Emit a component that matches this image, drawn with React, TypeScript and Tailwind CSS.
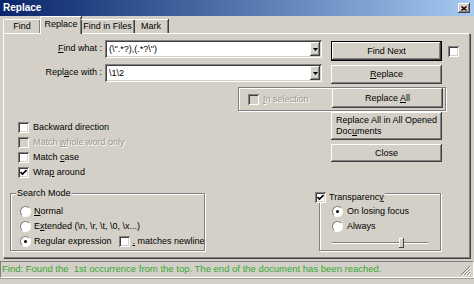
import React from "react";

const raised =
  "shadow-[inset_-1px_-1px_0_#404040,inset_1px_1px_0_#ffffff,inset_-2px_-2px_0_#808080]";
const raisedDef =
  "shadow-[inset_0_0_0_1px_#000000,inset_-2px_-2px_0_#404040,inset_2px_2px_0_#ffffff,inset_-3px_-3px_0_#808080]";
const sunken =
  "shadow-[inset_1px_1px_0_#808080,inset_-1px_-1px_0_#ffffff,inset_2px_2px_0_#404040,inset_-2px_-2px_0_#d4d0c8]";

function Btn({
  children,
  className = "",
  def = false,
}: {
  children: React.ReactNode;
  className?: string;
  def?: boolean;
}) {
  return (
    <div
      className={`flex items-center justify-center bg-[#d4d0c8] text-black text-[9px] leading-[11px] ${
        def ? raisedDef : raised
      } ${className}`}
    >
      {children}
    </div>
  );
}

function Check({
  checked = false,
  disabled = false,
}: {
  checked?: boolean;
  disabled?: boolean;
}) {
  return (
    <div
      className={`w-[11px] h-[11px] shrink-0 flex items-center justify-center ${
        disabled ? "bg-[#d4d0c8]" : "bg-white"
      } ${sunken}`}
    >
      {checked && (
        <svg width="7" height="7" viewBox="0 0 7 7">
          <path d="M0.5 3 L2.5 5 L6.5 1" stroke="#000" strokeWidth="1.6" fill="none" />
        </svg>
      )}
    </div>
  );
}

function Radio({ checked = false }: { checked?: boolean }) {
  return (
    <div className="w-[11px] h-[11px] shrink-0 rounded-full bg-white border border-[#808080] border-b-white border-r-white flex items-center justify-center">
      {checked && <div className="w-[3px] h-[3px] rounded-full bg-black" />}
    </div>
  );
}

function Combo({ value }: { value: string }) {
  return (
    <div className={`ml-[3px] w-[217px] h-[18px] bg-white flex items-center ${sunken}`}>
      <span className="pl-[4px] flex-1 text-[9px] leading-none text-black">{value}</span>
      <div
        className={`mr-[2px] w-[10px] h-[14px] bg-[#d4d0c8] flex items-center justify-center ${raised}`}
      >
        <svg width="5" height="3" viewBox="0 0 5 3">
          <path d="M0 0 H5 L2.5 3 Z" fill="#000" />
        </svg>
      </div>
    </div>
  );
}

export default function App() {
  return (
    <div className="w-[474px] h-[284px] bg-[#d4d0c8] flex flex-col overflow-hidden font-['Liberation_Sans',Arial,sans-serif] text-[9px] text-black select-none">
      {/* Title bar */}
      <div className="h-[16px] shrink-0 flex items-center justify-between pl-[3px] pr-[4px] bg-gradient-to-r from-[#0a246a] to-[#a6caf0]">
        <span className="text-white font-bold text-[10px] leading-none">Replace</span>
        <div className={`w-[12px] h-[10px] bg-[#d4d0c8] flex items-center justify-center ${raised}`}>
          <svg width="6" height="5" viewBox="0 0 6 5">
            <path d="M0.5 0.5 L5.5 4.5 M5.5 0.5 L0.5 4.5" stroke="#000" strokeWidth="1.4" />
          </svg>
        </div>
      </div>

      {/* Tabs */}
      <div className="h-[17px] shrink-0 flex items-end pl-[3px] relative z-10">
        <div className="w-[37px] h-[14px] flex items-center justify-center border-l border-t border-white rounded-tl-[2px] shadow-[inset_-1px_0_0_#808080]">
          Find
        </div>
        <div className="w-[41px] h-[18px] -mb-[1px] flex items-center justify-center pb-[1px] bg-[#d4d0c8] border-l border-t border-white rounded-tl-[2px] shadow-[inset_-1px_0_0_#808080,1px_0_0_#404040]">
          Replace
        </div>
        <div className="w-[53px] h-[14px] flex items-center justify-center border-t border-white shadow-[inset_-1px_0_0_#808080,1px_0_0_#404040]">
          Find in Files
        </div>
        <div className="w-[34px] h-[14px] flex items-center justify-center border-t border-white shadow-[inset_-1px_0_0_#808080,1px_0_0_#404040]">
          Mark
        </div>
      </div>

      {/* Panel */}
      <div className="ml-[3px] w-[467px] h-[225px] shrink-0 border-l border-t border-white border-r border-b border-r-[#808080] border-b-[#808080] shadow-[1px_1px_0_#404040] flex flex-col">
        {/* Row A */}
        <div className="mt-[6px] flex items-start">
          <div className="w-[98px] h-[18px] flex items-center justify-end">
            <span>
              <u>F</u>ind what :
            </span>
          </div>
          <Combo value={'(\\".*?),(.*?\\")'} />
          <Btn def className="ml-[9px] mt-[1px] w-[111px] h-[20px]">
            Find Next
          </Btn>
          <div className="ml-[6px] mt-[6px]">
            <Check />
          </div>
        </div>

        {/* Row B */}
        <div className="mt-[3px] flex items-start">
          <div className="w-[98px] h-[18px] flex items-center justify-end">
            <span>
              Repl<u>a</u>ce with :
            </span>
          </div>
          <Combo value={"\\1\\2"} />
          <Btn className="ml-[9px] mt-[1px] w-[111px] h-[19px]">
            <span>
              <u>R</u>eplace
            </span>
          </Btn>
        </div>

        {/* Row C: in selection frame */}
        <div className="mt-[3px] ml-[234px] w-[208px] h-[24px] border border-[#808080] shadow-[inset_1px_1px_0_#ffffff,1px_1px_0_#ffffff] flex items-start justify-between pr-[2px]">
          <div className="flex items-center pl-[9px] mt-[5px] text-[#9a978f]">
            <Check disabled />
            <span className="ml-[4px] [text-shadow:1px_1px_0_#ffffff]">
              <u>I</u>n selection
            </span>
          </div>
          <Btn className="w-[111px] h-[20px]">
            <span>
              Replace <u>A</u>ll
            </span>
          </Btn>
        </div>

        {/* Middle row */}
        <div className="flex items-start">
          <div className="w-[327px] pl-[14px] pt-[9px] flex flex-col">
            <div className="h-[15px] flex items-center">
              <Check />
              <span className="ml-[4px]">Backward direction</span>
            </div>
            <div className="h-[15px] flex items-center text-[#9a978f]">
              <Check disabled />
              <span className="ml-[4px] [text-shadow:1px_1px_0_#ffffff]">
                Match <u>w</u>hole word only
              </span>
            </div>
            <div className="h-[15px] flex items-center">
              <Check />
              <span className="ml-[4px]">
                Match <u>c</u>ase
              </span>
            </div>
            <div className="h-[15px] flex items-center">
              <Check checked />
              <span className="ml-[4px]">
                Wra<u>p</u> around
              </span>
            </div>
          </div>
          <div className="w-[111px] pt-[1px] flex flex-col">
            <Btn className="h-[28px] !justify-start pl-[5px] text-left">
              <span>
                Replace All in All Opened
                <br />
                Doc<u>u</u>ments
              </span>
            </Btn>
            <Btn className="mt-[4px] h-[18px]">Close</Btn>
          </div>
        </div>

        {/* Bottom row */}
        <div className="mt-[13px] flex items-start">
          <div className="relative ml-[6px] w-[195px] h-[58px] border border-[#808080] shadow-[inset_1px_1px_0_#ffffff,1px_1px_0_#ffffff] pl-[9px] pt-[10px] flex flex-col">
            <span className="absolute left-[5px] -top-[7px] px-[1px] bg-[#d4d0c8] leading-[12px]">
              Search Mode
            </span>
            <div className="h-[15px] flex items-center">
              <Radio />
              <span className="ml-[3px]">
                <u>N</u>ormal
              </span>
            </div>
            <div className="h-[15px] flex items-center">
              <Radio />
              <span className="ml-[3px]">
                E<u>x</u>tended (\n, \r, \t, \0, \x...)
              </span>
            </div>
            <div className="h-[15px] flex items-center whitespace-nowrap">
              <Radio checked />
              <span className="ml-[3px]">
                Re<u>g</u>ular expression
              </span>
              <div className="ml-[7px]">
                <Check />
              </div>
              <span className="ml-[3px]">
                <u>.</u> matches newline
              </span>
            </div>
          </div>

          <div className="relative ml-[114px] w-[122px] h-[58px] border border-[#808080] shadow-[inset_1px_1px_0_#ffffff,1px_1px_0_#ffffff] pl-[12px] pt-[10px] flex flex-col">
            <div className="absolute -left-[5px] -top-[3px] flex items-center bg-[#d4d0c8] pr-[1px]">
              <Check checked />
              <span className="ml-[3px] leading-[12px]">
                Transparenc<u>y</u>
              </span>
            </div>
            <div className="h-[15px] flex items-center">
              <Radio checked />
              <span className="ml-[4px]">On losing focus</span>
            </div>
            <div className="h-[15px] flex items-center">
              <Radio />
              <span className="ml-[4px]">Always</span>
            </div>
            <div className="relative mt-[4px] w-[96px] h-[10px] flex items-center">
              <div className="w-full h-[2px] border-t border-[#808080] border-b border-b-white" />
              <div className="absolute left-[67px] top-0 w-[5px] h-[10px] bg-[#d4d0c8] shadow-[inset_-1px_-1px_0_#404040,inset_1px_1px_0_#ffffff]" />
            </div>
          </div>
        </div>
      </div>

      {/* Status bar */}
      <div className="relative mt-[3px] h-[17px] shrink-0 flex items-center border-t border-l border-[#808080] border-b border-r border-b-white border-r-white">
        <span className="pl-[1px] text-[#36a836] text-[9.5px]">
          Find: Found the&nbsp; 1st occurrence from the top. The end of the document has been reached.
        </span>
        <svg className="absolute right-[2px] bottom-[1px]" width="11" height="11" viewBox="0 0 11 11">
          <path d="M10 1 L1 10 M10 4 L4 10 M10 7 L7 10" stroke="#808080" strokeWidth="1" />
          <path d="M11 2 L2 11 M11 5 L5 11 M11 8 L8 11" stroke="#ffffff" strokeWidth="1" />
        </svg>
      </div>
      <div className="flex-1 border-t border-[#a09c94] bg-[#d4d0c8]" />
    </div>
  );
}
